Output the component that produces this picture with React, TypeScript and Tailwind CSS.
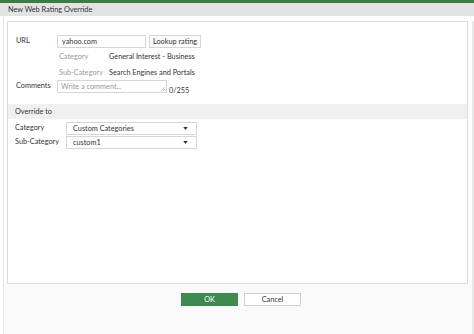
import { ReactNode } from 'react';

function Caret() {
    return (
        <svg className="w-[5px] h-[3px] text-[#333]" viewBox="0 0 6 4" fill="currentColor">
            <path d="M0 0h6L3 4z" />
        </svg>
    );
}

function Select({ value }: { value: string }) {
    return (
        <div className="w-[131px] h-[13px] border border-[#d6d6d6] bg-white flex items-center justify-between pl-[6px] pr-[8px]">
            <span className="text-[7.3px] leading-none text-[#333] whitespace-nowrap">{value}</span>
            <Caret />
        </div>
    );
}

function Row({ label, width, children, className = '' }: { label: string; width: number; children: ReactNode; className?: string }) {
    return (
        <div className={`flex items-center ${className}`}>
            <span className="shrink-0 text-[7.3px] text-[#333] whitespace-nowrap" style={{ width }}>{label}</span>
            {children}
        </div>
    );
}

export default function App() {
    return (
        <div className="w-[474px] h-[334px] bg-white flex flex-col overflow-hidden" style={{ fontFamily: 'Lato, "Open Sans", sans-serif' }}>
            <div className="h-[3px] bg-[#3e7a48]" />
            {/* Title */}
            <div className="h-[13px] bg-[#e3e3e3] flex items-center pl-[8px]">
                <span className="text-[7.3px] leading-none text-[#333]">New Web Rating Override</span>
            </div>

            <div className="flex-1 flex">
                <div className="w-[3px]" />
                <div className="w-px bg-[#e6e6e6]" />
                <div className="flex-1 flex flex-col">
                    <div className="h-[5px]" />
                    {/* Main panel */}
                    <div className="ml-[3px] mr-[4px] h-[263px] bg-white border border-[#dcdcdc] shadow-[0_1px_1px_rgba(0,0,0,0.08)] flex flex-col">
                        <div className="pl-[8px] pt-[13px]">
                            <Row label="URL" width={41}>
                                <div className="w-[89px] h-[13px] border border-[#d6d6d6] bg-white flex items-center pl-[4px]">
                                    <span className="text-[7.3px] leading-none text-[#333]">yahoo.com</span>
                                </div>
                                <div className="ml-[3px] w-[52px] h-[13px] border border-[#d6d6d6] bg-[#fafafa] flex items-center justify-center">
                                    <span className="text-[7.3px] leading-none text-[#333] whitespace-nowrap">Lookup rating</span>
                                </div>
                            </Row>
                            <div className="flex items-center mt-[3px] pl-[43px] h-[12px]">
                                <span className="shrink-0 w-[50px] text-[7.3px] text-[#9a9a9a] whitespace-nowrap">Category</span>
                                <span className="text-[7.3px] text-[#333] whitespace-nowrap">General Interest - Business</span>
                            </div>
                            <div className="flex items-center mt-[4px] pl-[43px] h-[12px]">
                                <span className="shrink-0 w-[50px] text-[7.3px] text-[#9a9a9a] whitespace-nowrap">Sub-Category</span>
                                <span className="text-[7.3px] text-[#333] whitespace-nowrap">Search Engines and Portals</span>
                            </div>
                            <div className="flex items-start mt-[1px]">
                                <span className="shrink-0 w-[41px] text-[7.3px] text-[#333] mt-[1px] whitespace-nowrap">Comments</span>
                                <div className="relative w-[110px] h-[13px] border border-[#d6d6d6] bg-white flex items-center pl-[3px]">
                                    <span className="text-[7.3px] leading-none text-[#999] whitespace-nowrap">Write a comment...</span>
                                    <svg className="absolute right-[1px] bottom-[1px] w-[4px] h-[4px] text-[#aaa]" viewBox="0 0 4 4" stroke="currentColor" strokeWidth={0.6}>
                                        <path d="M4 0L0 4M4 2L2 4" />
                                    </svg>
                                </div>
                                <span className="ml-[2px] mt-[6px] text-[7.3px] text-[#333]">0/255</span>
                            </div>
                        </div>

                        {/* Override section */}
                        <div className="mt-[7px] h-[15px] bg-[#f0f0f0] flex items-center pl-[7px]">
                            <span className="text-[7.3px] leading-none text-[#333]">Override to</span>
                        </div>
                        <div className="pl-[7px] pt-[3px] flex flex-col gap-[1px]">
                            <Row label="Category" width={51}>
                                <Select value="Custom Categories" />
                            </Row>
                            <Row label="Sub-Category" width={51}>
                                <Select value="custom1" />
                            </Row>
                        </div>
                    </div>

                    {/* Footer */}
                    <div className="flex-1 bg-[#fafafa] flex justify-center pt-[9px] pl-[6px]">
                        <div className="flex gap-[6px] h-[13px]">
                            <div className="w-[57px] h-[13px] bg-[#3f8a4f] flex items-center justify-center">
                                <span className="text-[7.3px] leading-none text-white">OK</span>
                            </div>
                            <div className="w-[57px] h-[13px] bg-white border border-[#d0d0d0] flex items-center justify-center">
                                <span className="text-[7.3px] leading-none text-[#333]">Cancel</span>
                            </div>
                        </div>
                    </div>
                </div>
                <div className="w-[2px] bg-[#e8e8e8] mt-[5px]" />
            </div>
        </div>
    );
}
